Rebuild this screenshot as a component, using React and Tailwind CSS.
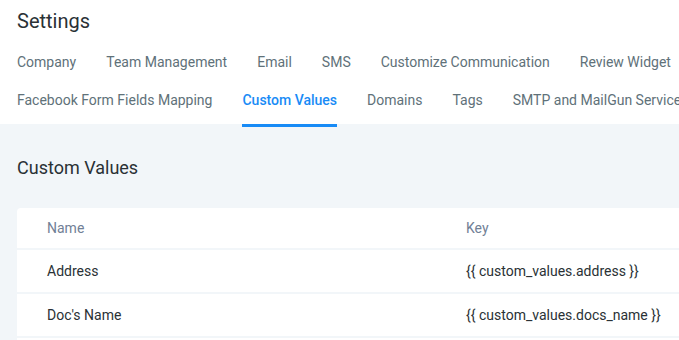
export default function App() {
  const row1 = ["Company", "Team Management", "Email", "SMS", "Customize Communication", "Review Widget"];
  const row2 = ["Facebook Form Fields Mapping", "Custom Values", "Domains", "Tags", "SMTP and MailGun Services"];
  const rows = [
    ["Address", "{{ custom_values.address }}"],
    ["Doc's Name", "{{ custom_values.docs_name }}"],
  ];
  return (
    <div className="w-[679px] h-[340px] overflow-hidden bg-[#f2f6f9]" style={{ fontFamily: "Roboto, 'Noto Sans', sans-serif" }}>
      <div className="w-[1100px]">
        <div className="bg-white pl-[17px] pt-[8px] h-[124px]">
          <h1 className="text-[20px] leading-[26px] text-[#2a3135]">Settings</h1>
          <div className="flex gap-[30px] mt-[18px] text-[14px] leading-[20px] text-[#607179] whitespace-nowrap">
            {row1.map((t) => (
              <span key={t}>{t}</span>
            ))}
          </div>
          <div className="flex gap-[30px] mt-[18px] text-[14px] leading-[20px] text-[#607179] whitespace-nowrap">
            {row2.map((t) => (
              <span
                key={t}
                className={
                  t === "Custom Values"
                    ? "text-[#188bf6] font-medium border-b-[3px] border-[#188bf6] pb-[14px]"
                    : "pb-[17px]"
                }
              >
                {t}
              </span>
            ))}
          </div>
        </div>
        <div className="px-[17px]">
          <h2 className="text-[18px] leading-[24px] text-[#2a3135] mt-[32px]">Custom Values</h2>
          <div className="mt-[28px] bg-[#f2f6f9] rounded-[4px] overflow-hidden flex flex-col gap-[2px] text-[14px]">
            <div className="bg-white grid grid-cols-[419px_1fr] pl-[30px] h-[40px] items-center text-[#718096]">
              <span>Name</span>
              <span>Key</span>
            </div>
            {rows.map(([n, k]) => (
              <div key={n} className="bg-white grid grid-cols-[419px_1fr] pl-[30px] h-[42px] items-center text-[#2a3135]">
                <span>{n}</span>
                <span>{k}</span>
              </div>
            ))}
            <div className="bg-white h-[42px]"></div>
          </div>
        </div>
      </div>
    </div>
  );
}
